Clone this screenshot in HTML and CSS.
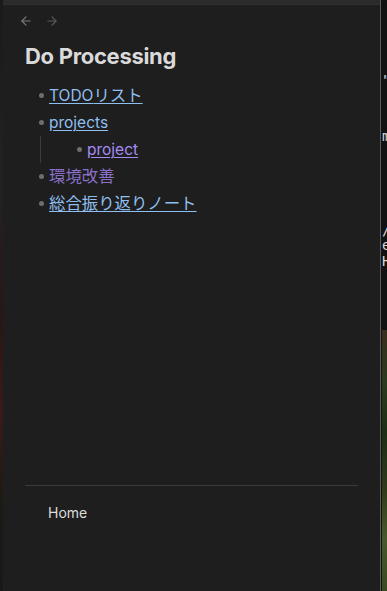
FILE: index.html
```html
<!DOCTYPE html>
<html lang="ja">
<head>
<meta charset="utf-8">
<link rel="stylesheet" href="styles.css">
</head>
<body>
<div class="screen">
  <div class="edge-left"></div>
  <div class="popover">
    <div class="topbar"></div>
    <div class="nav">
      <svg class="nav-btn back" width="14" height="14" viewBox="0 0 24 24" fill="none" stroke="currentColor" stroke-width="2" stroke-linecap="round" stroke-linejoin="round"><path d="M19 12H5"/><path d="M12 19l-7-7 7-7"/></svg>
      <svg class="nav-btn fwd" width="14" height="14" viewBox="0 0 24 24" fill="none" stroke="currentColor" stroke-width="2" stroke-linecap="round" stroke-linejoin="round"><path d="M5 12h14"/><path d="M12 5l7 7-7 7"/></svg>
    </div>
    <div class="content">
      <h1 class="title">Do Processing</h1>
      <ul class="list">
        <li><a class="link blue">TODO<span class="ja">リスト</span></a></li>
        <li><a class="link blue">projects</a>
          <ul class="list nested">
            <li><a class="link purple">project</a></li>
          </ul>
        </li>
        <li><a class="link unresolved"><span class="ja">環境改善</span></a></li>
        <li><a class="link blue"><span class="ja">総合振り返りノート</span></a></li>
      </ul>
    </div>
    <div class="footer">
      <div class="footer-rule"></div>
      <div class="footer-item">Home</div>
    </div>
  </div>
  <div class="edge-right">
    <div class="frag f1">"</div>
    <div class="frag f2">m</div>
    <div class="frag f3">/</div>
    <div class="frag f4">e</div>
    <div class="frag f5">H</div>
    <div class="green"></div>
  </div>
</div>
</body>
</html>
```
FILE: styles.css
```css
html, body {
  margin: 0;
  padding: 0;
  background: #121212;
}
body {
  width: 387px;
  height: 591px;
  overflow: hidden;
  font-family: Inter, "Noto Sans CJK JP", sans-serif;
}
.screen {
  display: flex;
  height: 591px;
}
.edge-left {
  width: 3px;
  flex: none;
  background: linear-gradient(180deg, #1a1a1a 0%, #222 30%, #2a1616 55%, #3a1a18 70%, #1c1a14 85%, #181818 100%);
}
.popover {
  width: 378px;
  flex: none;
  background: #1e1e1e;
  border-right: 1px solid #5a5a5a;
  box-sizing: border-box;
  display: flex;
  flex-direction: column;
}
.topbar {
  height: 4px;
  background: #2b2b2b;
  border-bottom: 1px solid #303030;
}
.nav {
  display: flex;
  gap: 12px;
  padding: 9px 0 0 16px;
  height: 20px;
  color: #7a7a7a;
}
.nav-btn.fwd {
  color: #5a5a5a;
}
.content {
  padding: 0 0 0 22px;
  flex: 1;
}
.title {
  margin: 7px 0 0 0;
  font-size: 22px;
  font-weight: 700;
  letter-spacing: -0.3px;
  color: #dadada;
  line-height: 30px;
}
.list {
  list-style: none;
  margin: 11px 0 0 0;
  padding: 0 0 0 24px;
}
.list li {
  position: relative;
  font-size: 15.5px;
  line-height: 27px;
}
.ja {
  font-size: 16.4px;
}
.list li::before {
  content: "";
  position: absolute;
  left: -10px;
  top: 11px;
  width: 5px;
  height: 5px;
  border-radius: 50%;
  background: #6e6e6e;
}
.list.nested {
  margin: 0 0 0 -9px;
  padding-left: 46px;
  border-left: 1px solid #3c3c3c;
}
.link {
  text-decoration: underline;
  text-underline-offset: 2px;
  text-decoration-thickness: 1px;
}
.blue { color: #8fbff0; }
.purple { color: #a58bf3; }
.unresolved {
  color: #8a70c8;
  text-decoration: none;
}
.footer {
  height: 106px;
  padding: 0 22px;
}
.footer-rule {
  height: 1px;
  background: #3a3a3a;
}
.footer-item {
  margin: 18px 0 0 23px;
  font-size: 14px;
  color: #dcdcdc;
  line-height: 18px;
}
.edge-right {
  flex: 1;
  position: relative;
  background: #121212;
  overflow: hidden;
}
.frag {
  position: absolute;
  left: 1px;
  font-family: "DejaVu Sans Mono", monospace;
  font-size: 14px;
  color: #d8d8d8;
  line-height: 16px;
}
.f1 { top: 72px; }
.f2 { top: 128px; }
.f3 { top: 222px; }
.f4 { top: 237px; }
.f5 { top: 253px; }
.green {
  position: absolute;
  left: 1px;
  right: 0;
  top: 330px;
  bottom: 0;
  background: linear-gradient(180deg, #3a2e1c 0%, #2a3a1e 20%, #1e2e14 40%, #2e3a1a 60%, #485a2a 80%, #3a4a22 100%);
}
```
